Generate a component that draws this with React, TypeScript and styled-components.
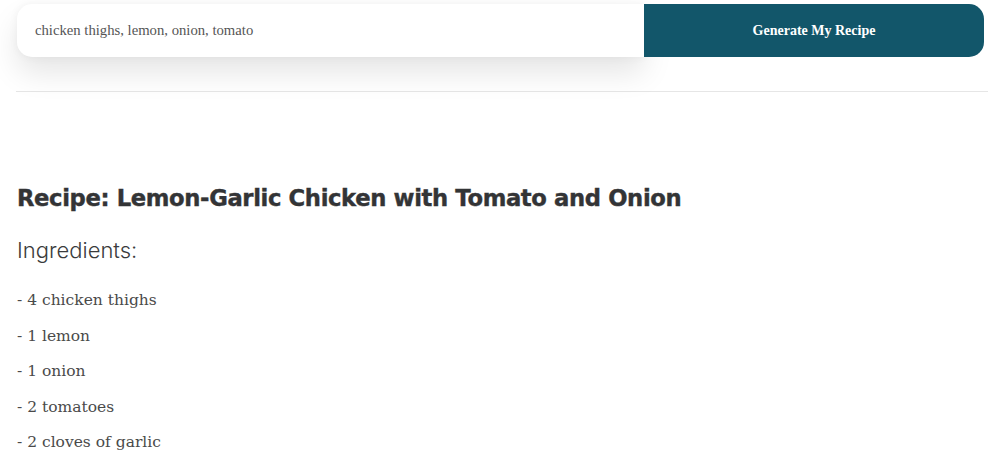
import React from "react";
import styled, { createGlobalStyle } from "styled-components";

const Global = createGlobalStyle`
  html, body { margin: 0; padding: 0; background: #ffffff; }
  body { font-family: "Liberation Serif", serif; }
  * { box-sizing: border-box; }
`;

const Page = styled.div`
  padding: 4px 12px 0 17px;
  width: 1000px;
`;

const Form = styled.form`
  display: flex;
  width: 967px;
  height: 53px;
`;

const Input = styled.input`
  flex: 1;
  height: 100%;
  border: none;
  outline: none;
  background: #ffffff;
  border-radius: 15px 0 0 15px;
  padding: 0 0 0 18px;
  font-family: "Liberation Serif", serif;
  font-size: 14.7px;
  color: #555555;
  box-shadow: 0 16px 30px rgba(0, 0, 0, 0.1), 0 0 10px rgba(0, 0, 0, 0.05);
`;

const Button = styled.button`
  width: 340px;
  height: 100%;
  border: none;
  background: #12566a;
  color: #ffffff;
  border-radius: 0 15px 15px 0;
  font-family: "Liberation Serif", serif;
  font-weight: 700;
  font-size: 14px;
  cursor: pointer;
`;

const Divider = styled.hr`
  margin: 34px 0 0 -1px;
  width: 972px;
  border: none;
  border-top: 1px solid #e6e6e6;
`;

const Content = styled.div`
  padding-top: 90px;
`;

const Title = styled.h2`
  margin: 0;
  font-family: "DejaVu Sans", sans-serif;
  font-weight: 700;
  font-size: 22.7px;
  letter-spacing: -0.37px;
  color: #333436;
  line-height: 32px;
  -webkit-text-stroke: 0.4px #333436;
`;

const Subtitle = styled.h3`
  margin: 21px 0 0 0;
  font-family: "Inter", sans-serif;
  font-weight: 300;
  font-size: 22px;
  color: #3a3b3c;
  line-height: 30px;
`;

const List = styled.div`
  margin-top: 23px;
  display: flex;
  flex-direction: column;
  gap: 11px;
`;

const Item = styled.p`
  margin: 0;
  font-family: "DejaVu Serif", serif;
  font-size: 15.5px;
  color: #4a4a4a;
  line-height: 24.5px;
`;

const items = [
  "- 4 chicken thighs",
  "- 1 lemon",
  "- 1 onion",
  "- 2 tomatoes",
  "- 2 cloves of garlic",
];

export default function App() {
  return (
    <>
      <Global />
      <Page>
        <Form onSubmit={(e) => e.preventDefault()}>
          <Input defaultValue="chicken thighs, lemon, onion, tomato" />
          <Button type="submit">Generate My Recipe</Button>
        </Form>
        <Divider />
        <Content>
          <Title>Recipe: Lemon-Garlic Chicken with Tomato and Onion</Title>
          <Subtitle>Ingredients:</Subtitle>
          <List>
            {items.map((t) => (
              <Item key={t}>{t}</Item>
            ))}
          </List>
        </Content>
      </Page>
    </>
  );
}
